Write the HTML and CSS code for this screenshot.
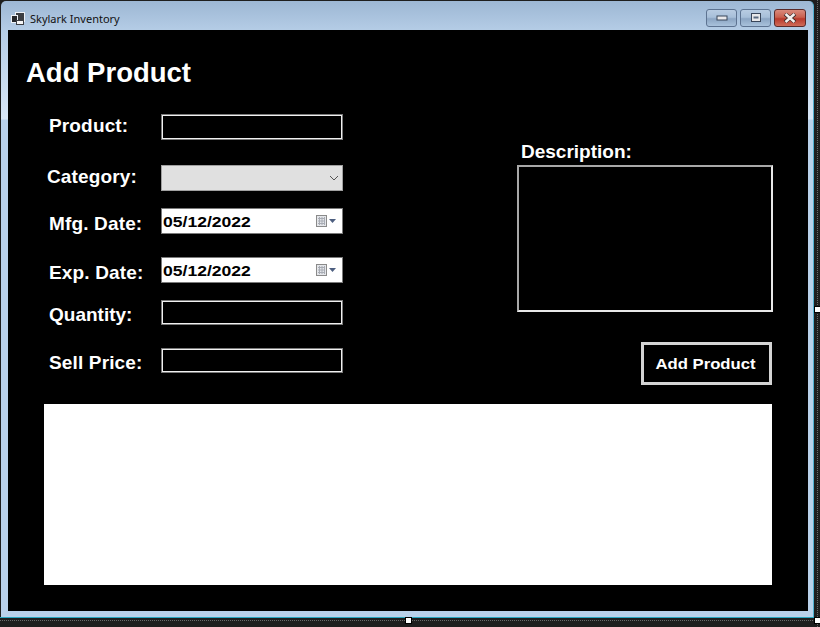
FILE: index.html
```html
<!DOCTYPE html>
<html lang="en">
  <head>
    <meta charset="UTF-8" />
    <link rel="stylesheet" href="styles.css">
    <title>Skylark Inventory</title>
  </head>
  <body>
    <div class="window">
      <div class="titlebar">
        <svg class="appicon" width="14" height="13" viewBox="0 0 14 13">
          <rect x="4.5" y="0.5" width="9" height="9" fill="#3c3f44" stroke="#eef2f7" />
          <rect x="0.5" y="3.5" width="6" height="7" fill="#26282c" stroke="#eef2f7" />
          <rect x="5.5" y="8.5" width="7" height="4" fill="#f6f6f6" stroke="#3c3f44" />
        </svg>
        <span class="wintitle">Skylark Inventory</span>
        <div class="winbtns">
          <div class="winbtn">
            <svg width="12" height="6" viewBox="0 0 12 6"><rect x="1" y="1" width="10" height="4" fill="#e8e8ea" stroke="#39465a" /></svg>
          </div>
          <div class="winbtn">
            <svg width="12" height="10" viewBox="0 0 12 10"><rect x="1.5" y="0.5" width="9" height="8" fill="#e8e8ea" stroke="#39465a" /><rect x="3.5" y="3.5" width="5" height="2" fill="#5a6a80" /></svg>
          </div>
          <div class="winbtn close">
            <svg width="14" height="10" viewBox="0 0 14 10"><path d="M2 1 L12 9 M12 1 L2 9" stroke="#3a2a2a" stroke-width="4" /><path d="M2.5 1 L11.5 9 M11.5 1 L2.5 9" stroke="#f4f0ee" stroke-width="2.4" /></svg>
          </div>
        </div>
      </div>
      <div class="client">
        <h1 class="heading">Add Product</h1>
        <div class="panels">
          <div class="fields">
            <label class="lbl up">Product:</label>
            <div class="txt"></div>

            <label class="lbl up left">Category:</label>
            <div class="combo">
              <svg width="10" height="6" viewBox="0 0 10 6"><path d="M1 1 L5 5 L9 1" fill="none" stroke="#555" /></svg>
            </div>

            <label class="lbl date">Mfg. Date:</label>
            <div class="datebox">
              <span class="datetext">05/12/2022</span>
              <svg class="calicon" width="20" height="12" viewBox="0 0 20 12">
                <rect x="0.5" y="0.5" width="10" height="11" fill="#e4e6ea" stroke="#8a8a8a" />
                <path d="M2 3.5 H9 M2 6 H9 M2 8.5 H9 M3.5 2 V10 M6 2 V10 M8.5 2 V10" stroke="#a8acb4" />
                <path d="M13 4 H20 L16.5 8 Z" fill="#4d5f80" />
              </svg>
            </div>

            <label class="lbl date">Exp. Date:</label>
            <div class="datebox">
              <span class="datetext">05/12/2022</span>
              <svg class="calicon" width="20" height="12" viewBox="0 0 20 12">
                <rect x="0.5" y="0.5" width="10" height="11" fill="#e4e6ea" stroke="#8a8a8a" />
                <path d="M2 3.5 H9 M2 6 H9 M2 8.5 H9 M3.5 2 V10 M6 2 V10 M8.5 2 V10" stroke="#a8acb4" />
                <path d="M13 4 H20 L16.5 8 Z" fill="#4d5f80" />
              </svg>
            </div>

            <label class="lbl down tight">Quantity:</label>
            <div class="txt short"></div>

            <label class="lbl down">Sell Price:</label>
            <div class="txt short"></div>
          </div>
          <div class="side">
            <label class="lbl desc tight">Description:</label>
            <div class="descbox"></div>
            <button class="addbtn"><span class="addtext">Add Product</span></button>
          </div>
        </div>
        <div class="grid"></div>
      </div>
      <div class="handle right"></div>
    </div>
    <div class="statusbar">
      <div class="handle center"></div>
      <div class="handle corner"></div>
    </div>
  </body>
</html>
```

FILE: styles.css
```css
* {
  box-sizing: border-box;
}
html,
body {
  margin: 0;
  height: 627px;
  overflow: hidden;
  font-family: "Liberation Sans", Arial, sans-serif;
}
body {
  padding-top: 1px;
  background: #1e1e1e repeating-linear-gradient(to bottom, #6a6a6a 0, #6a6a6a 1px, transparent 1px, transparent 2px) 817px 0 / 1px 100% no-repeat;
}
.window {
  position: relative;
  width: 813px;
  height: 616px;
  margin-left: 1px;
  padding: 0 5px 6px 7px;
  border-right: 1px solid #4fb0d0;
  background: linear-gradient(to bottom, #9db7d4 0, #b5cde6 30px, #d8e6f6 118px, #b9d1ea 119px);
  border-radius: 5px 5px 0 0;
}
.titlebar {
  display: flex;
  align-items: center;
  height: 29px;
  padding-left: 3px;
  padding-top: 6px;
}
.appicon {
  margin-right: 5px;
}
.wintitle {
  font-family: "Noto Sans", sans-serif;
  font-size: 11px;
  color: #111;
}
.winbtns {
  display: flex;
  gap: 3px;
  align-self: flex-start;
  margin-left: auto;
  margin-right: 2px;
  margin-top: 2px;
}
.winbtn {
  display: flex;
  justify-content: center;
  align-items: center;
  width: 31px;
  height: 18px;
  border: 1px solid #5d7391;
  border-radius: 3px;
  background: linear-gradient(to bottom, #b8cce2 0, #a7bfd9 45%, #8ba5c3 55%, #a9c2dc 100%);
}
.winbtn.close {
  width: 32px;
  border-color: #5a2a2a;
  background: linear-gradient(to bottom, #d98a7c 0, #c9604f 45%, #b8392c 55%, #cf6b58 100%);
}
.client {
  width: 800px;
  height: 581px;
  padding: 24px 36px 0 36px;
  background-color: #000;
}
.heading {
  margin: 0 0 0 -18px;
  height: 37px;
  font-size: 27.5px;
  line-height: 37px;
  font-weight: bold;
  color: #fff;
}
.panels {
  display: flex;
  margin-top: 23px;
  height: 290px;
}
.fields {
  display: grid;
  flex-shrink: 0;
  grid-template-columns: 117px 182px;
  grid-template-rows: 51px 43px 49px 43px 48px 26px;
}
.lbl {
  display: block;
  padding-left: 5px;
  font-size: 19px;
  line-height: 26px;
  font-weight: bold;
  letter-spacing: 0.15px;
  color: #fff;
}
.lbl.up {
  margin-top: -1px;
}
.lbl.down {
  margin-top: 2px;
}
.lbl.date {
  margin-top: 3px;
}
.lbl.left {
  padding-left: 3px;
}
.lbl.tight {
  letter-spacing: 0;
}
.txt {
  height: 26px;
  border: 1px solid #7a7a7a;
  box-shadow: inset 0 0 0 1px #f0f0f0;
  background-color: #000;
}
.txt.short {
  height: 25px;
}
.combo {
  display: flex;
  justify-content: flex-end;
  align-items: center;
  height: 26px;
  padding-right: 3px;
  border: 1px solid #a0a0a0;
  background-color: #e0e0e0;
}
.datebox {
  display: flex;
  align-items: center;
  height: 26px;
  padding-left: 1px;
  border: 1px solid #7a7a7a;
  background-color: #fff;
}
.datetext {
  font-size: 15px;
  font-weight: bold;
  color: #000;
  transform: scaleX(1.17);
  transform-origin: left center;
}
.calicon {
  margin-left: auto;
  margin-right: 6px;
}
.side {
  display: flex;
  flex-direction: column;
  flex-shrink: 0;
  margin-left: 174px;
  width: 256px;
}
.desc {
  height: 25px;
  margin-top: 26px;
  padding-left: 4px;
  line-height: 24px;
}
.descbox {
  height: 147px;
  border: 2px solid;
  border-color: #a8a8a8 #e8e8e8 #e8e8e8 #a8a8a8;
  background-color: #000;
}
.addbtn {
  align-self: flex-end;
  width: 131px;
  height: 43px;
  margin-top: 30px;
  margin-right: 1px;
  padding: 0 2px 0 0;
  border: 3px solid #d4d4d4;
  background-color: #000;
  font-family: "Liberation Sans", Arial, sans-serif;
  font-size: 14.5px;
  font-weight: bold;
  color: #fff;
}
.addtext {
  display: inline-block;
  transform: scaleX(1.15);
}
.grid {
  width: 728px;
  height: 181px;
  background-color: #fff;
}
.statusbar {
  position: relative;
  height: 10px;
  background:
    linear-gradient(#2aa7c0, #2aa7c0) 0 0 / 814px 1px no-repeat,
    repeating-linear-gradient(to right, #6a6a6a 0, #6a6a6a 1px, transparent 1px, transparent 2px) 0 3px / 100% 1px no-repeat;
}
.handle {
  position: absolute;
  width: 7px;
  height: 7px;
  background-color: #fff;
  border: 1px solid #000;
}
.handle.right {
  left: 813px;
  top: 305px;
}
.handle.center {
  left: 405px;
  top: 0;
}
.handle.corner {
  left: 814px;
  top: 0;
}
```
